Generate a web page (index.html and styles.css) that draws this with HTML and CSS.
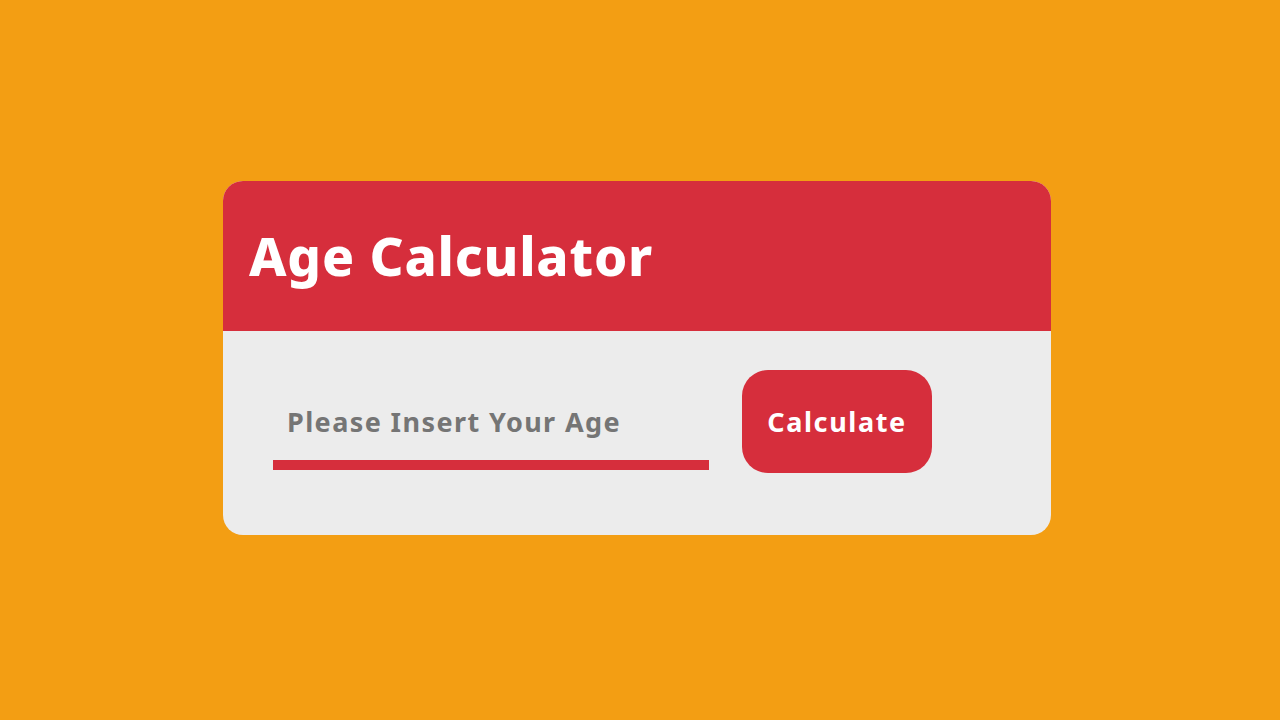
FILE: index.html
```html
<!DOCTYPE html>
<html>
<head>
<meta charset="utf-8">
<link rel="stylesheet" href="styles.css">
</head>
<body>
<div class="card">
  <div class="card-head">
    <h1 class="title">Age Calculator</h1>
  </div>
  <div class="card-body">
    <input class="age-input" type="text" placeholder="Please Insert Your Age">
    <button class="calc-btn">Calculate</button>
  </div>
</div>
</body>
</html>
```
FILE: styles.css
```css
html, body {
  margin: 0;
  height: 100%;
}
body {
  background: #f39e13;
  display: flex;
  align-items: center;
  justify-content: center;
  padding: 0 6px 4px 0;
  box-sizing: border-box;
  font-family: "Noto Sans", "DejaVu Sans", sans-serif;
}
.card {
  width: 828px;
  height: 354px;
  border-radius: 20px;
  overflow: hidden;
  background: #ececec;
  display: flex;
  flex-direction: column;
}
.card-head {
  height: 150px;
  background: #d62e3c;
  display: flex;
  align-items: center;
  padding-left: 26px;
}
.title {
  margin: 0;
  color: #fff;
  font-size: 53px;
  font-weight: 800;
  letter-spacing: 0.8px;
  line-height: 1;
  padding-bottom: 2px;
}
.card-body {
  flex: 1;
  display: flex;
  align-items: flex-start;
  padding: 39px 0 0 50px;
  gap: 33px;
}
.age-input {
  width: 436px;
  height: 100px;
  box-sizing: border-box;
  border: none;
  border-bottom: 10px solid #d62e3c;
  background: transparent;
  padding: 12px 14px 0;
  font-family: inherit;
  font-size: 27px;
  font-weight: 700;
  letter-spacing: 1.4px;
  color: #555;
  outline: none;
}
.age-input::placeholder {
  color: #757575;
  opacity: 1;
}
.calc-btn {
  width: 190px;
  height: 103px;
  border: none;
  border-radius: 26px;
  background: #d62e3c;
  color: #fff;
  font-family: inherit;
  font-size: 27px;
  font-weight: 700;
  letter-spacing: 1.6px;
  padding: 0;
}
```
